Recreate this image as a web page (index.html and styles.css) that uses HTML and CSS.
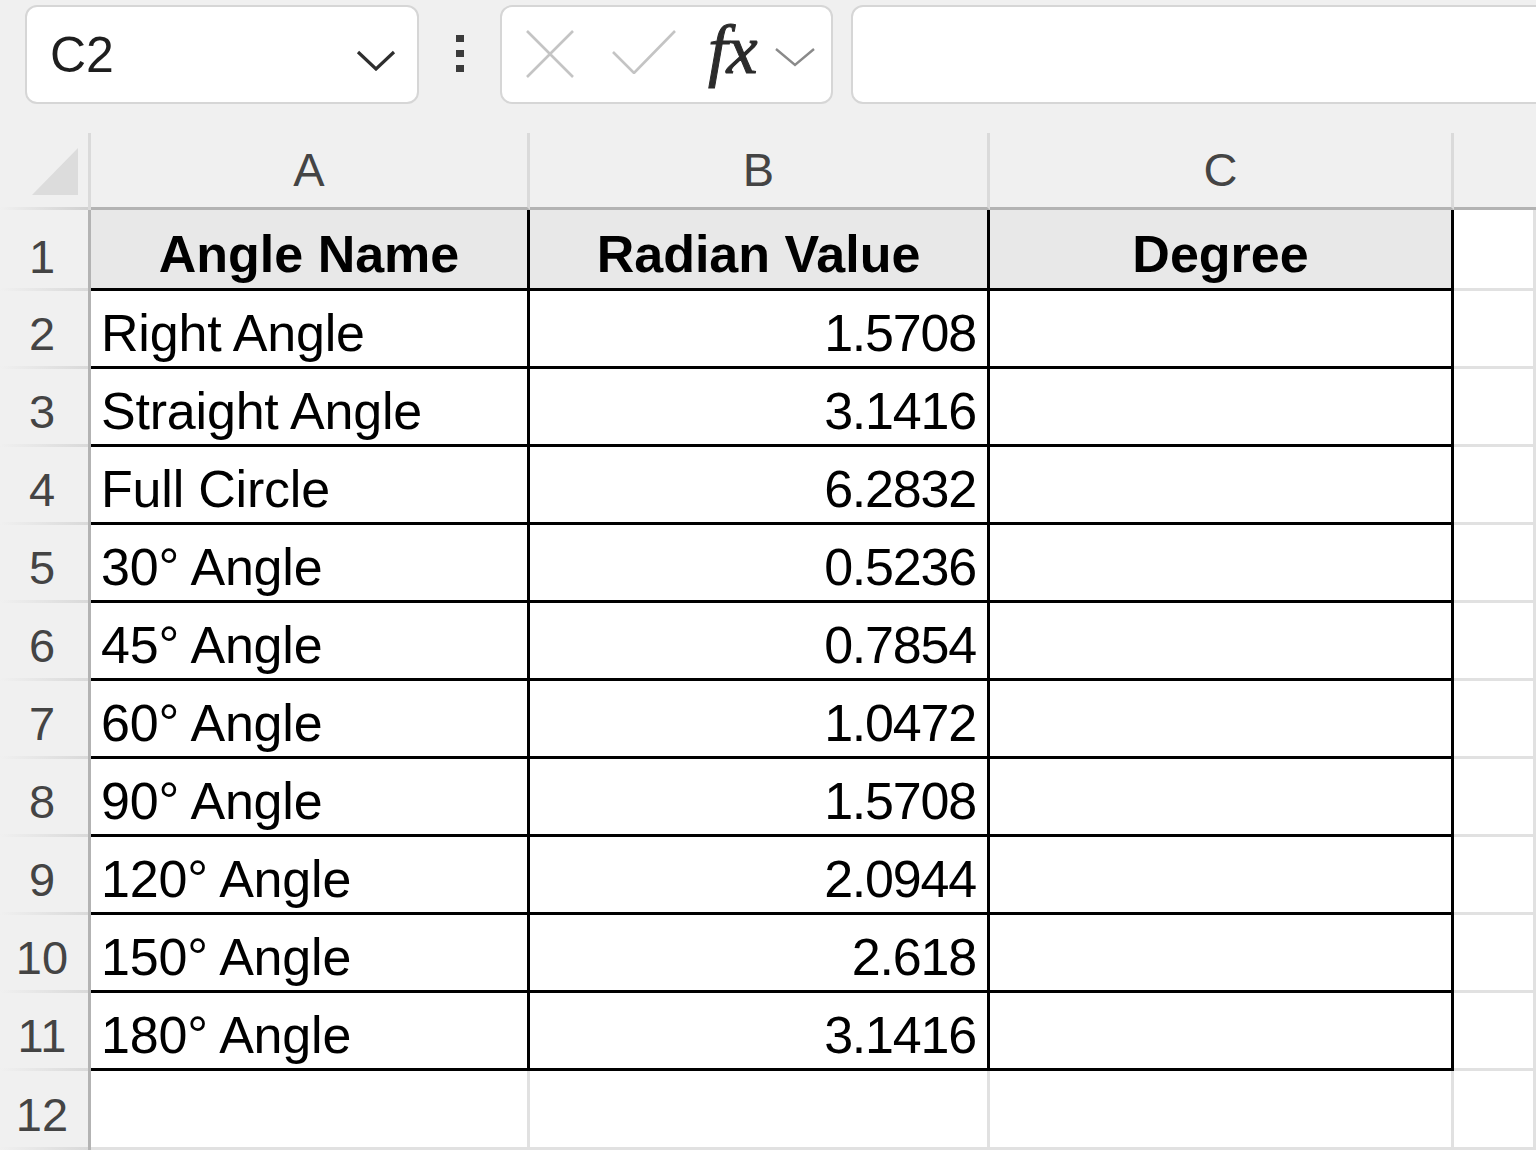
FILE: index.html
```html
<!DOCTYPE html>
<html>
<head>
<meta charset="utf-8">
<link rel="stylesheet" href="styles.css">
</head>
<body>
<div class="toolbar">
  <div class="namebox">
    <span class="ref">C2</span>
    <svg class="nb-chev" width="40" height="22" viewBox="0 0 40 22"><polyline points="2,3 20,20 38,3" fill="none" stroke="#2e2e2e" stroke-width="3.2"/></svg>
  </div>
  <div class="dots"><i></i><i></i><i></i></div>
  <div class="fxbox">
    <svg class="ic-x" width="48" height="48" viewBox="0 0 48 48"><path d="M1 1 L47 47 M47 1 L1 47" stroke="#c4c4c4" stroke-width="2.6" fill="none"/></svg>
    <svg class="ic-check" width="64" height="44" viewBox="0 0 64 44"><polyline points="1,22 22,43 63,1" fill="none" stroke="#c4c4c4" stroke-width="2.6"/></svg>
    <span class="fx">fx</span>
    <svg class="ic-chev" width="40" height="20" viewBox="0 0 40 20"><polyline points="1,2 20,18 39,2" fill="none" stroke="#8a8a8a" stroke-width="2.4"/></svg>
  </div>
  <div class="formula"></div>
</div>
<div class="sheet">
  <div class="c corner"><svg width="46" height="47" viewBox="0 0 46 47"><polygon points="46,0 46,47 0,47" fill="#dcdcdc"/></svg></div>
  <div class="c colhead">A</div>
  <div class="c colhead">B</div>
  <div class="c colhead">C</div>
  <div class="c colhead last"></div>

  <div class="c rowhead r1">1</div>
  <div class="c th">Angle Name</div>
  <div class="c th">Radian Value</div>
  <div class="c th">Degree</div>
  <div class="c blank"></div>

  <div class="c rowhead">2</div>
  <div class="c td">Right Angle</div>
  <div class="c td num">1.5708</div>
  <div class="c td"></div>
  <div class="c blank"></div>

  <div class="c rowhead">3</div>
  <div class="c td">Straight Angle</div>
  <div class="c td num">3.1416</div>
  <div class="c td"></div>
  <div class="c blank"></div>

  <div class="c rowhead">4</div>
  <div class="c td">Full Circle</div>
  <div class="c td num">6.2832</div>
  <div class="c td"></div>
  <div class="c blank"></div>

  <div class="c rowhead">5</div>
  <div class="c td">30° Angle</div>
  <div class="c td num">0.5236</div>
  <div class="c td"></div>
  <div class="c blank"></div>

  <div class="c rowhead">6</div>
  <div class="c td">45° Angle</div>
  <div class="c td num">0.7854</div>
  <div class="c td"></div>
  <div class="c blank"></div>

  <div class="c rowhead">7</div>
  <div class="c td">60° Angle</div>
  <div class="c td num">1.0472</div>
  <div class="c td"></div>
  <div class="c blank"></div>

  <div class="c rowhead">8</div>
  <div class="c td">90° Angle</div>
  <div class="c td num">1.5708</div>
  <div class="c td"></div>
  <div class="c blank"></div>

  <div class="c rowhead">9</div>
  <div class="c td">120° Angle</div>
  <div class="c td num">2.0944</div>
  <div class="c td"></div>
  <div class="c blank"></div>

  <div class="c rowhead">10</div>
  <div class="c td">150° Angle</div>
  <div class="c td num">2.618</div>
  <div class="c td"></div>
  <div class="c blank"></div>

  <div class="c rowhead">11</div>
  <div class="c td">180° Angle</div>
  <div class="c td num">3.1416</div>
  <div class="c td"></div>
  <div class="c blank"></div>

  <div class="c rowhead">12</div>
  <div class="c blank"></div>
  <div class="c blank"></div>
  <div class="c blank"></div>
  <div class="c blank"></div>
</div>
</body>
</html>
```
FILE: styles.css
```css
html, body {
  margin: 0;
  padding: 0;
  overflow: hidden;
  background: #f0f0f0;
  font-family: "Liberation Sans", Arial, sans-serif;
}
body {
  width: 1536px;
  height: 1150px;
}

/* ---------- toolbar ---------- */
.toolbar {
  height: 133px;
  box-sizing: border-box;
  padding: 5px 0 0 25px;
  display: flex;
  align-items: flex-start;
}
.namebox {
  width: 394px;
  height: 99px;
  box-sizing: border-box;
  border: 2px solid #d6d6d6;
  border-radius: 12px;
  background: #fff;
  display: flex;
  align-items: center;
  justify-content: space-between;
  padding: 0 21px 0 23px;
}
.ref {
  font-size: 50px;
  color: #1e1e1e;
  line-height: 1;
}
.nb-chev {
  margin-top: 10px;
}
.dots {
  display: flex;
  flex-direction: column;
  gap: 8px;
  margin: 30px 36px 0 37px;
}
.dots i {
  display: block;
  width: 8px;
  height: 7px;
  background: #3b3b3b;
}
.fxbox {
  width: 333px;
  height: 99px;
  box-sizing: border-box;
  border: 2px solid #d6d6d6;
  border-radius: 12px;
  background: #fff;
  display: flex;
  align-items: center;
  padding-left: 24px;
}
.ic-x {
  margin-top: -2px;
}
.ic-check {
  margin-left: 38px;
  margin-top: -6px;
}
.fx {
  margin-left: 32px;
  font-family: "Liberation Serif", "Times New Roman", serif;
  font-style: italic;
  font-size: 70px;
  line-height: 1;
  color: #2b2b2b;
  letter-spacing: -1px;
  margin-top: -10px;
  -webkit-text-stroke: 1px #2b2b2b;
}
.ic-chev {
  margin-left: 18px;
  margin-top: 4px;
}
.formula {
  flex: 1;
  height: 99px;
  box-sizing: border-box;
  margin-left: 18px;
  margin-right: -30px;
  border: 2px solid #d6d6d6;
  border-radius: 12px;
  background: #fff;
}

/* ---------- sheet ---------- */
.sheet {
  display: grid;
  grid-template-columns: 91px 439px 460px 464px 1fr;
  grid-template-rows: 77px 81px repeat(10, 78px) 79px;
}
.c {
  box-sizing: border-box;
  display: flex;
  align-items: flex-end;
  overflow: hidden;
  white-space: nowrap;
}
.corner {
  align-items: flex-start;
  padding: 15px 0 0 32px;
  border-right: 3px solid #dadada;
  background: linear-gradient(to right, #f0f0f0, #d0d0d0) bottom / 100% 3px no-repeat, #f0f0f0;
}
.colhead {
  justify-content: center;
  background: #f0f0f0;
  border-right: 3px solid #dadada;
  border-bottom: 3px solid #b3b3b3;
  font-size: 47px;
  color: #444;
  padding-bottom: 10px;
}
.colhead.last {
  border-right: 0;
}
.rowhead {
  justify-content: center;
  background: linear-gradient(to right, #f0f0f0, #d9d9d9) bottom / 100% 3px no-repeat, #f0f0f0;
  border-right: 3px solid #b3b3b3;
  font-size: 47px;
  color: #444;
  padding: 0 4px 8px 0;
}
.rowhead.r1 {
  padding-bottom: 7px;
}
.th {
  justify-content: center;
  background: #e8e8e8;
  border-right: 3px solid #000;
  border-bottom: 3px solid #000;
  font-size: 52px;
  font-weight: bold;
  color: #000;
  padding-bottom: 4px;
}
.td {
  background: #fff;
  border-right: 3px solid #000;
  border-bottom: 3px solid #000;
  font-size: 52px;
  letter-spacing: -0.2px;
  color: #000;
  padding: 0 10px 3px 10px;
}
.td.num {
  justify-content: flex-end;
  letter-spacing: -1.2px;
  padding-right: 11px;
}
.blank {
  background: #fff;
  border-right: 3px solid #e1e1e1;
  border-bottom: 3px solid #e1e1e1;
}
```
